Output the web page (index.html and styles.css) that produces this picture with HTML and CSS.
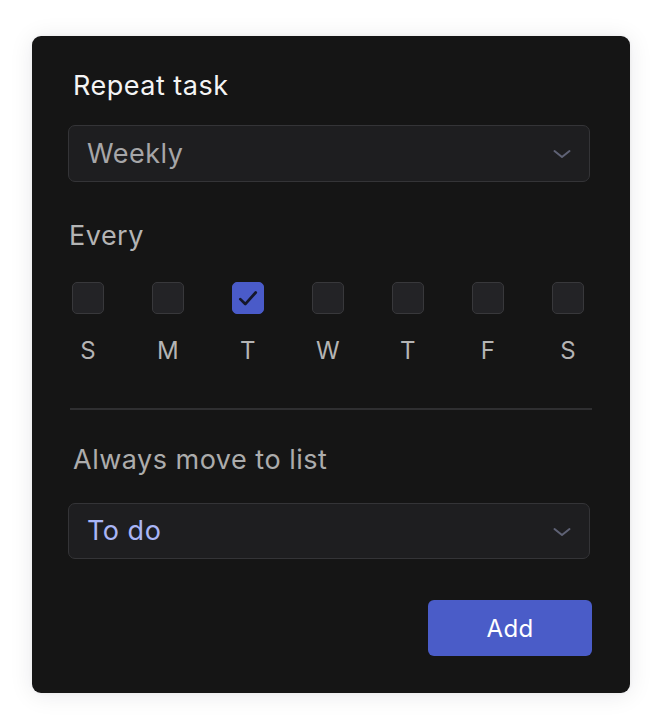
FILE: index.html
```html
<!DOCTYPE html>
<html lang="en">
<head>
<meta charset="utf-8">
<title>Repeat task</title>
<link rel="stylesheet" href="styles.css">
</head>
<body>
<div class="card">
  <div class="title">Repeat task</div>
  <div class="select select-first">
    <span class="select-value">Weekly</span>
    <svg class="chevron" width="18" height="10" viewBox="0 0 18 10"><path d="M1.5 2 L9 8 L16.5 2" fill="none" stroke="#5f6275" stroke-width="2" stroke-linecap="round" stroke-linejoin="round"/></svg>
  </div>
  <div class="label every">Every</div>
  <div class="days">
    <div class="day"><span class="box"></span><span class="day-name">S</span></div>
    <div class="day"><span class="box"></span><span class="day-name">M</span></div>
    <div class="day"><span class="box box-checked"><svg width="22" height="22" viewBox="0 0 20 20"><path d="M3 11 L7.5 15.5 L17 5" fill="none" stroke="#15172a" stroke-width="2.5" stroke-linecap="round" stroke-linejoin="round"/></svg></span><span class="day-name">T</span></div>
    <div class="day"><span class="box"></span><span class="day-name">W</span></div>
    <div class="day"><span class="box"></span><span class="day-name">T</span></div>
    <div class="day"><span class="box"></span><span class="day-name">F</span></div>
    <div class="day"><span class="box"></span><span class="day-name">S</span></div>
  </div>
  <div class="divider"></div>
  <div class="label always">Always move to list</div>
  <div class="select select-second">
    <span class="select-value list-value">To do</span>
    <svg class="chevron" width="18" height="10" viewBox="0 0 18 10"><path d="M1.5 2 L9 8 L16.5 2" fill="none" stroke="#5f6275" stroke-width="2" stroke-linecap="round" stroke-linejoin="round"/></svg>
  </div>
  <div class="actions">
    <button class="btn">Add</button>
  </div>
</div>
</body>
</html>
```
FILE: styles.css
```css
* { box-sizing: border-box; }
html, body {
  margin: 0;
  padding: 0;
  background: #ffffff;
}
body {
  font-family: Inter, "Noto Sans", sans-serif;
  padding: 36px 32px 28px 32px;
}
.card {
  width: 598px;
  height: 657px;
  background: #151515;
  border-radius: 9px;
  box-shadow: 0 2px 24px rgba(20, 20, 40, 0.09), 0 0 4px rgba(0,0,0,0.05);
  padding: 34px 40px 0 36px;
  display: flex;
  flex-direction: column;
}
.title {
  font-size: 27px;
  letter-spacing: 0.5px;
  line-height: 32px;
  color: #f4f4f4;
  padding-left: 5px;
}
.select {
  height: 57px;
  border: 1.5px solid #343437;
  border-radius: 7px;
  background: #1e1e20;
  display: flex;
  align-items: center;
  justify-content: space-between;
  padding: 0 18px 0 18px;
}
.select-first { margin-top: 23px; }
.select-second { margin-top: 27px; height: 56px; }
.select-value {
  font-size: 27px;
  letter-spacing: 0.5px;
  color: #a6a6a8;
  line-height: 32px;
}
.list-value { color: #a9b5f6; }
.chevron { display: block; margin-top: 1px; }
.label {
  font-size: 27px;
  letter-spacing: 0.5px;
  line-height: 32px;
  color: #b4b4b4;
}
.every { margin-top: 38px; padding-left: 1px; }
.always { margin-top: 34px; padding-left: 5px; color: #acacac; }
.days {
  display: flex;
  gap: 40px;
  margin-top: 30px;
}
.day {
  width: 40px;
  display: flex;
  flex-direction: column;
  align-items: center;
}
.box {
  width: 32px;
  height: 32px;
  border-radius: 5px;
  background: #232326;
  border: 1.5px solid #38383b;
  display: flex;
  align-items: center;
  justify-content: center;
}
.box-checked {
  background: #4a5bc9;
  border-color: #4a5bc9;
}
.day-name {
  margin-top: 22px;
  font-size: 24px;
  letter-spacing: 0.3px;
  line-height: 30px;
  color: #b4b4b4;
}
.divider {
  margin-top: 42px;
  height: 2px;
  background: #2f2f31;
  margin-left: 2px;
  margin-right: -2px;
}
.actions {
  display: flex;
  justify-content: flex-end;
  margin-top: 41px;
  margin-right: -2px;
}
.btn {
  width: 164px;
  height: 56px;
  border: none;
  border-radius: 6px;
  background: #4a5cc8;
  color: #ffffff;
  font-family: Inter, "Noto Sans", sans-serif;
  font-size: 24px;
  letter-spacing: 0.3px;
}
```
